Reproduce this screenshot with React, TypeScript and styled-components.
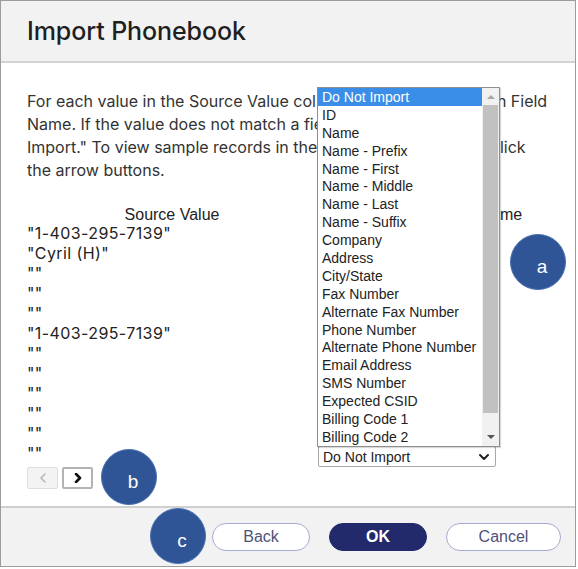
import React from 'react'
import styled, {createGlobalStyle} from 'styled-components'

const GlobalStyle = createGlobalStyle`
    body{
        margin:0;
        background:#ffffff;
    }
`

const fieldNames = [
    'Do Not Import', 'ID', 'Name', 'Name - Prefix', 'Name - First', 'Name - Middle',
    'Name - Last', 'Name - Suffix', 'Company', 'Address', 'City/State', 'Fax Number',
    'Alternate Fax Number', 'Phone Number', 'Alternate Phone Number', 'Email Address',
    'SMS Number', 'Expected CSID', 'Billing Code 1', 'Billing Code 2',
]

const sourceValues = [
    '"1-403-295-7139"', '"Cyril (H)"', '""', '""', '""', '"1-403-295-7139"',
    '""', '""', '""', '""', '""', '""',
]

const Chevron: React.FC<{dir: 'left' | 'right' | 'down', color: string, weight: number}> = ({dir, color, weight}) => {
    const points = dir === 'left' ? '6,1 2,5 6,9' : dir === 'right' ? '2,1 6,5 2,9' : '1,2 5,6 9,2'
    const box = dir === 'down' ? '0 0 10 8' : '0 0 8 10'
    return (
        <svg width={dir === 'down' ? 10 : 8} height={dir === 'down' ? 8 : 10} viewBox={box}>
            <polyline points={points} fill="none" stroke={color} strokeWidth={weight} strokeLinecap="round" strokeLinejoin="round"/>
        </svg>
    )
}

const Triangle: React.FC<{up?: boolean, color: string}> = ({up, color}) => (
    <svg width="8" height="5" viewBox="0 0 8 5">
        <polygon points={up ? '0,5 4,1 8,5' : '0,0 8,0 4,4'} fill={color}/>
    </svg>
)

const App: React.FC = () => {
    return (
        <Dialog>
            <GlobalStyle/>
            <Header>
                <Title>Import Phonebook</Title>
            </Header>
            <Body>
                <Intro>
                    For each value in the Source Value column, select a Destination Field<br/>
                    Name. If the value does not match a field, select "Do Not<br/>
                    Import." To view sample records in the Source Value column, click<br/>
                    the arrow buttons.
                </Intro>
                <MapTable>
                    <ColHead>Source Value</ColHead>
                    <ColHead>Destination Field Name</ColHead>
                    <ValueList>
                        {sourceValues.map((v, i) => <ValueRow key={i}>{v}</ValueRow>)}
                    </ValueList>
                    <FieldCell>
                        <SelectBox>
                            <span>Do Not Import</span>
                            <Chevron dir="down" color="#222" weight={2}/>
                            <ListBox>
                                <Options>
                                    {fieldNames.map((f, i) => (
                                        <Option key={f} selected={i === 0}>{f}</Option>
                                    ))}
                                </Options>
                                <ScrollBar>
                                    <ScrollArrow><Triangle up color="#a8a8a8"/></ScrollArrow>
                                    <Thumb/>
                                    <ScrollArrow><Triangle color="#555"/></ScrollArrow>
                                </ScrollBar>
                            </ListBox>
                        </SelectBox>
                    </FieldCell>
                </MapTable>
                <Pager>
                    <PageButton disabled><Chevron dir="left" color="#b4b4b4" weight={1.5}/></PageButton>
                    <PageButton><Chevron dir="right" color="#111" weight={2.6}/></PageButton>
                </Pager>
            </Body>
            <Footer>
                <ActionButton>Back</ActionButton>
                <ActionButton primary>OK</ActionButton>
                <ActionButton wide>Cancel</ActionButton>
            </Footer>
            <Callout left={509} top={233}>a</Callout>
            <Callout left={100} top={448}>b</Callout>
            <Callout left={149} top={507}>c</Callout>
        </Dialog>
    )
}

const Dialog = styled.div`
    position:relative;
    box-sizing:border-box;
    width:576px;
    height:567px;
    border:1px solid #9c9c9c;
    display:flex;
    flex-direction:column;
    font-family:Inter, "Liberation Sans", sans-serif;
    color:#333;
    background:#fff;
`

const Header = styled.div`
    height:60px;
    background:#f2f2f2;
    border-bottom:2px solid #d3d3d3;
    display:flex;
    align-items:center;
    padding-left:26px;
`

const Title = styled.h1`
    margin:0;
    font-size:25px;
    font-weight:500;
    color:#1f1f1f;
    letter-spacing:-0.1px;
`

const Body = styled.div`
    flex:1;
    padding:27px 0 0 26px;
`

const Intro = styled.p`
    margin:0;
    font-size:16px;
    line-height:23px;
    color:#333;
`

const MapTable = styled.div`
    margin-top:24px;
    display:grid;
    grid-template-columns:290px 244px;
`

const ColHead = styled.div`
    font-size:16px;
    line-height:17px;
    text-align:center;
    color:#222;
    font-family:"Liberation Sans", sans-serif;
`

const ValueList = styled.div`
    display:flex;
    flex-direction:column;
`

const ValueRow = styled.div`
    font-size:16px;
    line-height:20px;
    color:#222;
    letter-spacing:0.4px;
    white-space:nowrap;
`

const FieldCell = styled.div`
    display:flex;
    align-items:flex-end;
    padding-left:1px;
`

const SelectBox = styled.div`
    position:relative;
    box-sizing:border-box;
    width:178px;
    height:21px;
    margin-bottom:-4px;
    border:1px solid #a9a9a9;
    border-radius:2px;
    display:flex;
    align-items:center;
    justify-content:space-between;
    padding:0 6px 0 4px;
    font-family:"Liberation Sans", Arial, sans-serif;
    font-size:14px;
    color:#222;
    background:#fff;
`

const ListBox = styled.div`
    position:absolute;
    left:-2px;
    bottom:100%;
    box-sizing:border-box;
    width:183px;
    height:360px;
    border:1px solid #8e8e8e;
    background:#fff;
    display:flex;
    overflow:hidden;
    box-shadow:1px 1px 1px rgba(0,0,0,0.15);
`

const Options = styled.div`
    flex:1;
    display:flex;
    flex-direction:column;
    overflow:hidden;
`

const Option = styled.div<{selected?: boolean}>`
    flex:none;
    height:17.9px;
    line-height:18px;
    padding-left:4px;
    white-space:nowrap;
    font-size:14px;
    color:${props => props.selected ? '#fff' : '#222'};
    background:${props => props.selected ? '#3a8ee8' : 'transparent'};
`

const ScrollBar = styled.div`
    width:17px;
    background:#f1f1f1;
    display:flex;
    flex-direction:column;
`

const ScrollArrow = styled.div`
    height:17px;
    display:flex;
    align-items:center;
    justify-content:center;
`

const Thumb = styled.div`
    height:308px;
    margin:0 1px 16px;
    background:#c1c1c1;
`

const Pager = styled.div`
    margin-top:4px;
    display:flex;
    gap:4px;
`

const PageButton = styled.button`
    box-sizing:border-box;
    width:31px;
    height:22px;
    padding:0;
    display:flex;
    align-items:center;
    justify-content:center;
    border-radius:2px;
    border:${props => props.disabled ? '1px solid #dedede' : '2px solid #b3b3b3'};
    background:${props => props.disabled ? '#f3f3f3' : '#fff'};
`

const Footer = styled.div`
    height:58px;
    background:#f2f2f2;
    border-top:2px solid #cfcfcf;
    display:flex;
    align-items:center;
    justify-content:flex-end;
    gap:19px;
    padding-right:14px;
`

const ActionButton = styled.button<{primary?: boolean, wide?: boolean}>`
    box-sizing:border-box;
    width:${props => props.wide ? '115px' : '98px'};
    height:28px;
    border-radius:14px;
    font-family:"Liberation Sans", Arial, sans-serif;
    font-size:16px;
    font-weight:${props => props.primary ? 600 : 400};
    border:${props => props.primary ? '1.5px solid #232a6c' : '1.5px solid #a6aad0'};
    background:${props => props.primary ? '#232a6c' : '#fff'};
    color:${props => props.primary ? '#fff' : '#4d5278'};
`

const Callout = styled.div<{left: number, top: number}>`
    position:absolute;
    left:${props => props.left}px;
    top:${props => props.top}px;
    box-sizing:border-box;
    width:56px;
    height:56px;
    border-radius:50%;
    background:#2f5597;
    border:1px solid #4a70b0;
    display:flex;
    align-items:center;
    justify-content:center;
    padding:10px 0 0 8px;
    color:#fff;
    font-family:"Liberation Sans Narrow", "Liberation Sans", sans-serif;
    font-size:19px;
`

export default App
